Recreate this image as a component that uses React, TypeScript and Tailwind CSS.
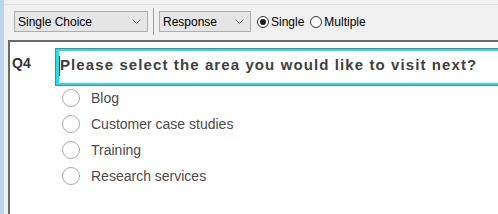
import React from "react";

const options = ["Blog", "Customer case studies", "Training", "Research services"];

function Chevron() {
  return (
    <svg width="9" height="6" viewBox="0 0 9 6" className="shrink-0">
      <path d="M0.5 0.5 L4.5 4.5 L8.5 0.5" fill="none" stroke="#6a6a6a" strokeWidth="1" />
    </svg>
  );
}

function Select({ label, width }: { label: string; width: string }) {
  return (
    <div
      className={`flex h-[21px] ${width} items-center justify-between border border-[#adadad] bg-[#e5e5e5] pl-[3px] pr-[6px] text-[12px] text-black`}
    >
      <span>{label}</span>
      <Chevron />
    </div>
  );
}

function ToolRadio({ label, checked }: { label: string; checked?: boolean }) {
  return (
    <div className="flex items-center gap-[2px] text-[12px] text-black">
      <span className="flex h-[12px] w-[12px] items-center justify-center rounded-full border border-[#333] bg-white">
        {checked && <span className="h-[6px] w-[6px] rounded-full bg-[#1a1a1a]" />}
      </span>
      <span>{label}</span>
    </div>
  );
}

export default function App() {
  return (
    <div
      className="flex h-[214px] w-[498px] overflow-hidden bg-[#f0f0f0]"
      style={{ fontFamily: '"Liberation Sans", Arial, sans-serif' }}
    >
      <div className="w-[4px] shrink-0 bg-[#bcd5ee]" />
      <div className="flex min-w-0 flex-1 flex-col">
        {/* toolbar */}
        <div className="mt-[4px] h-[28px] border-t border-[#e2e2e2]">
          <div className="flex items-center pl-[10px] pt-[3px]">
            <Select label="Single Choice" width="w-[134px]" />
            <div className="mx-[5px] h-[27px] w-px bg-[#a0a0a0]" />
            <Select label="Response" width="w-[92px]" />
            <div className="ml-[6px] flex items-center gap-[6px]">
              <ToolRadio label="Single" checked />
              <ToolRadio label="Multiple" />
            </div>
          </div>
        </div>
        <div className="h-[8px]" />

        {/* question panel */}
        <div className="ml-[4px] flex-1 border-l-2 border-t-2 border-l-[#6a6a6a] border-t-[#6a6a6a] bg-white">
          <div className="flex pt-[6px]">
            <div className="w-[45px] shrink-0 pl-[2px] pt-[5px] text-[14px] font-bold text-[#333]">Q4</div>
            <div className="flex h-[38px] flex-1 border border-r-0 border-[#7a7a7a]">
              <div className="flex flex-1 items-start border-[2px] border-l-[3px] border-r-0 border-[#1ee3e6] pt-[3px]">
                <div className="mt-[2px] h-[20px] w-px bg-[#333]" />
                <span className="whitespace-nowrap text-[15px] font-bold tracking-[1.1px] text-[#404040]">
                  Please select the area you would like to visit next?
                </span>
              </div>
            </div>
          </div>
          <div className="flex flex-col pl-[52px]">
            {options.map((o) => (
              <div key={o} className="flex h-[26px] items-center gap-[11px] first:-mt-[1px]">
                <span className="h-[18px] w-[18px] rounded-full border-[1.5px] border-[#a9a9a9] bg-white" />
                <span className="text-[14px] text-[#4a4a4a]">{o}</span>
              </div>
            ))}
          </div>
        </div>
      </div>
    </div>
  );
}
